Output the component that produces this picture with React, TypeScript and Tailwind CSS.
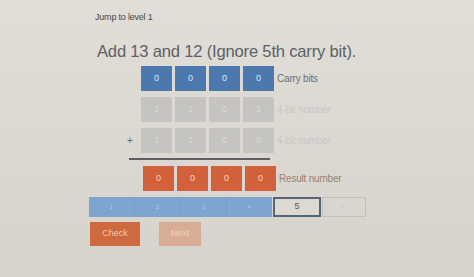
const carry = ["0", "0", "0", "0"];
const first = ["1", "1", "0", "1"];
const second = ["1", "1", "0", "0"];
const result = ["0", "0", "0", "0"];

function BitRow({
  bits,
  box,
  label,
  labelClass,
  prefix,
}: {
  bits: string[];
  box: string;
  label: string;
  labelClass: string;
  prefix?: string;
}) {
  return (
    <div className="flex items-center">
      <span className="w-[14px] text-[10px] text-[#6a6c70]">{prefix}</span>
      <div className="flex gap-[3px]">
        {bits.map((b, i) => (
          <div key={i} className={`flex h-[25px] w-[31px] items-center justify-center text-[9px] ${box}`}>
            {b}
          </div>
        ))}
      </div>
      <span className={`ml-[3px] text-[10px] tracking-[-0.2px] ${labelClass}`}>{label}</span>
    </div>
  );
}

export default function App() {
  return (
    <div
      className="h-[277px] w-[474px] overflow-hidden bg-gradient-to-b from-[#e1ded7] to-[#d6d3cc] pl-[95px] pt-[12px] text-[#555a60]"
      style={{ fontFamily: '"Liberation Sans", Arial, sans-serif' }}
    >
      <p className="text-[9px] leading-[11px] tracking-[-0.2px] text-[#45484c]">Jump to level 1</p>
      <h1 className="ml-[2px] mt-[19px] text-[16.6px] leading-[20px] tracking-[-0.2px] text-[#5b6167]">
        Add 13 and 12 (Ignore 5th carry bit).
      </h1>

      <div className="ml-[32px] mt-[4px] flex flex-col gap-[6px]">
        <BitRow bits={carry} box="bg-[#4b79ae] text-[#dfe6ee]" label="Carry bits" labelClass="text-[#6c6f74]" />
        <BitRow bits={first} box="bg-[#c6c4c0] text-[#dcdad6]" label="4-bit number" labelClass="text-[#c9c7c2]" />
        <BitRow bits={second} box="bg-[#c6c4c0] text-[#dcdad6]" label="4-bit number" labelClass="text-[#c9c7c2]" prefix="+" />
      </div>

      <div className="ml-[34px] mt-[5px] h-[2px] w-[141px] bg-[#5e5f60]" />

      <div className="ml-[34px] mt-[6px]">
        <BitRow bits={result} box="bg-[#d2603a] text-[#f1d9cc]" label="Result number" labelClass="text-[#9b8275]" />
      </div>

      <div className="-ml-[6px] mt-[6px] flex h-[20px] items-stretch text-[6px]">
        <div className="flex w-[183px] bg-[#7ea5d0] text-[#b2cbe5]">
          {["1", "2", "3", "4"].map((n, i) => (
            <div key={n} className={`flex flex-1 items-center justify-center ${i > 0 ? "border-l border-[#779ec9]" : ""}`}>
              {n}
            </div>
          ))}
        </div>
        <div className="ml-[1px] flex w-[48px] items-center justify-center border-2 border-[#56667a] bg-[#dcd9d3] text-[9px] text-[#5a5d60]">
          5
        </div>
        <div className="ml-[1px] flex w-[44px] items-center justify-center border border-[#c2c0bb] text-[#c8c5c0]">6</div>
      </div>

      <div className="-ml-[5px] mt-[5px] flex gap-[19px] text-[9px]">
        <div className="flex h-[24px] w-[50px] items-center justify-center bg-[#cf6a3f] text-[#eec8b5]">Check</div>
        <div className="flex h-[24px] w-[42px] items-center justify-center bg-[#d8ac95] text-[#ead4c8]">Next</div>
      </div>
    </div>
  );
}
